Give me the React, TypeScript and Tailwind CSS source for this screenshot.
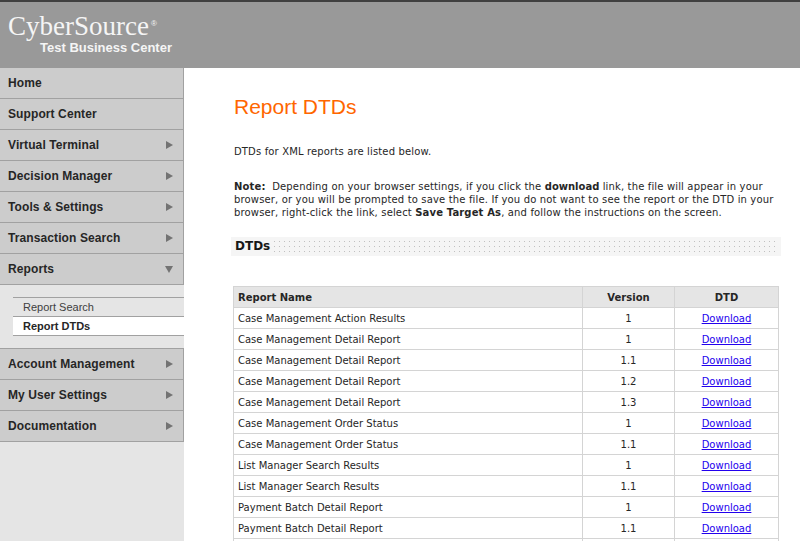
const rows = [
  ["Case Management Action Results", "1"],
  ["Case Management Detail Report", "1"],
  ["Case Management Detail Report", "1.1"],
  ["Case Management Detail Report", "1.2"],
  ["Case Management Detail Report", "1.3"],
  ["Case Management Order Status", "1"],
  ["Case Management Order Status", "1.1"],
  ["List Manager Search Results", "1"],
  ["List Manager Search Results", "1.1"],
  ["Payment Batch Detail Report", "1"],
  ["Payment Batch Detail Report", "1.1"],
  ["Payment Batch Detail Report", "1.2"],
];

const NavItem = ({ label, arrow }: { label: string; arrow?: "right" | "down" }) => (
  <div className="flex h-[31px] items-center justify-between border-b border-neutral-400 bg-[#cccccc] pl-2 pr-2.5 text-xs font-bold tracking-[0.1px] text-neutral-800">
    <span>{label}</span>
    {arrow === "right" && (
      <svg width="7" height="8" viewBox="0 0 7 8" className="fill-neutral-500">
        <path d="M0 0 L7 4 L0 8 Z" />
      </svg>
    )}
    {arrow === "down" && (
      <svg width="8" height="7" viewBox="0 0 8 7" className="fill-neutral-500">
        <path d="M0 0 H8 L4 7 Z" />
      </svg>
    )}
  </div>
);

export default function App() {
  return (
    <div className="flex h-screen flex-col overflow-hidden bg-white font-['Liberation_Sans',sans-serif]">
      {/* Header */}
      <header className="h-[68px] shrink-0 border-t-2 border-neutral-700 bg-[#999999] pl-2 text-neutral-100">
        <div className="flex items-start pt-2">
          <span className="font-['Liberation_Serif',serif] text-[27px] leading-8">CyberSource</span>
          <span className="mt-1 pl-0.5 text-[8px] leading-5">®</span>
        </div>
        <div className="pl-8 text-[13px] font-bold leading-3">Test Business Center</div>
      </header>

      <div className="flex min-h-0 flex-1">
        {/* Sidebar */}
        <aside className="w-[184px] shrink-0 bg-neutral-200">
          <div className="border-r border-neutral-400">
            <NavItem label="Home" />
            <NavItem label="Support Center" />
            <NavItem label="Virtual Terminal" arrow="right" />
            <NavItem label="Decision Manager" arrow="right" />
            <NavItem label="Tools & Settings" arrow="right" />
            <NavItem label="Transaction Search" arrow="right" />
            <NavItem label="Reports" arrow="down" />
          </div>
          <div className="py-3 pl-3.25 text-[11px]">
            <div className="flex h-5 items-center border-y border-neutral-400 pl-2.5 text-neutral-700">Report Search</div>
            <div className="flex h-[19px] items-center border-b border-neutral-400 bg-white pl-2.5 font-bold text-neutral-800">Report DTDs</div>
          </div>
          <div className="border-r border-t border-neutral-400">
            <NavItem label="Account Management" arrow="right" />
            <NavItem label="My User Settings" arrow="right" />
            <NavItem label="Documentation" arrow="right" />
          </div>
        </aside>

        {/* Content */}
        <main className="min-w-0 flex-1 pl-12 pr-5 pt-7 font-['DejaVu_Sans',sans-serif] text-[10px] leading-[13px] text-neutral-800">
          <div className="px-0.5 tracking-[0.15px]">
            <h1 className="font-['Liberation_Sans',sans-serif] text-[21px] leading-[21px] tracking-normal text-[#ff6600]">Report DTDs</h1>
            <p className="mt-7">DTDs for XML reports are listed below.</p>
            <p className="mt-5.5">
              <b>Note:</b>&nbsp; Depending on your browser settings, if you click the <b className="tracking-normal">download</b> link, the file will appear in your
              browser, or you will be prompted to save the file. If you do not want to see the report or the DTD in your
              browser, right-click the link, select <b>Save Target As</b>, and follow the instructions on the screen.
            </p>
          </div>

          <div className="-mx-px mt-4.5 flex h-[19px] bg-neutral-100 pl-1 pr-1">
            <span className="pr-1 text-xs font-bold leading-[19px] text-neutral-900">DTDs</span>
            <svg className="mt-1 h-3 flex-1" aria-hidden="true">
              <defs>
                <pattern id="dots" width="5" height="5" patternUnits="userSpaceOnUse">
                  <rect width="1" height="1" fill="#c0c0c0" />
                </pattern>
              </defs>
              <rect width="100%" height="100%" fill="url(#dots)" />
            </svg>
          </div>

          <div className="mx-px mt-7.5">
            <table className="w-full table-fixed border-collapse">
              <thead>
                <tr className="h-[21px] bg-neutral-200 font-bold">
                  <th className="w-[349px] border border-neutral-300 px-1 text-left">Report Name</th>
                  <th className="w-[92px] border border-neutral-300 text-center">Version</th>
                  <th className="border border-neutral-300 text-center">DTD</th>
                </tr>
              </thead>
              <tbody>
                {rows.map((row, i) => (
                  <tr key={i} className="h-[21px]">
                    <td className="border border-neutral-300 px-1">{row[0]}</td>
                    <td className="border border-neutral-300 text-center">{row[1]}</td>
                    <td className="border border-neutral-300 text-center">
                      <a href="#" className="text-[#2200ee] underline">Download</a>
                    </td>
                  </tr>
                ))}
              </tbody>
            </table>
          </div>
        </main>
      </div>
    </div>
  );
}
